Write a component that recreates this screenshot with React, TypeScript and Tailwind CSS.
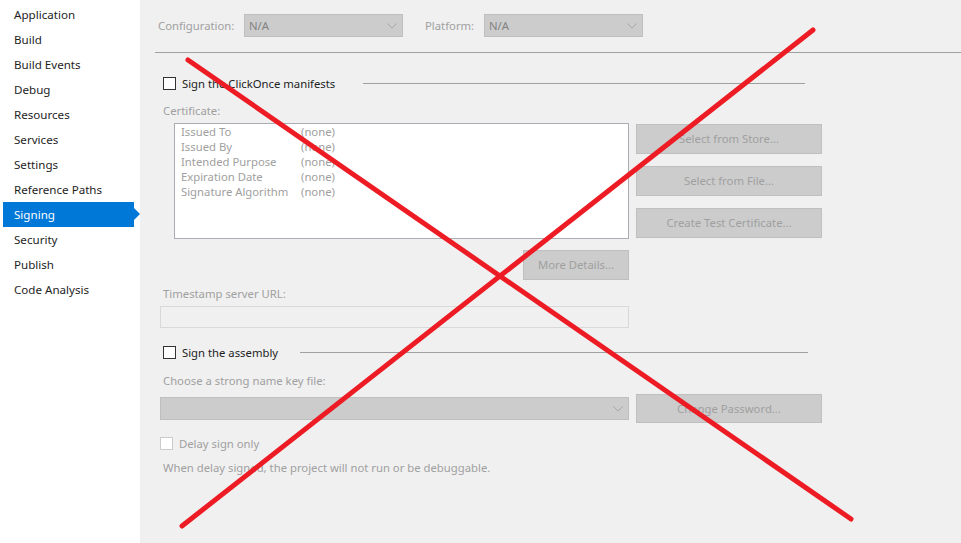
import React from 'react';

const navItems = [
  'Application',
  'Build',
  'Build Events',
  'Debug',
  'Resources',
  'Services',
  'Settings',
  'Reference Paths',
  'Signing',
  'Security',
  'Publish',
  'Code Analysis',
];

const certRows = [
  ['Issued To', '(none)'],
  ['Issued By', '(none)'],
  ['Intended Purpose', '(none)'],
  ['Expiration Date', '(none)'],
  ['Signature Algorithm', '(none)'],
];

const Chevron = () => (
  <svg width="10" height="6" viewBox="0 0 10 6" className="shrink-0">
    <path d="M0.5 0.5 L5 5 L9.5 0.5" fill="none" stroke="#a6a6a6" strokeWidth="1" />
  </svg>
);

const Combo = ({ value, className }: { value?: string; className: string }) => (
  <div className={`flex items-center justify-between bg-[#cccccc] border border-[#bfbfbf] pl-[4px] pr-[5px] text-[#838383] ${className}`}>
    <span>{value}</span>
    <Chevron />
  </div>
);

const DisabledButton = ({ label, className }: { label: string; className: string }) => (
  <div className={`flex items-center justify-center bg-[#cccccc] border border-[#bfbfbf] text-[#a0a0a0] ${className}`}>
    {label}
  </div>
);

export default function App() {
  return (
    <div className="relative flex h-screen w-full overflow-hidden text-[11.3px] leading-[16px] text-[#1e1e1e]" style={{ fontFamily: '"Noto Sans", "Segoe UI", sans-serif' }}>
      {/* side nav */}
      <div className="w-[140px] shrink-0 bg-white pt-[2px] text-[11.6px]">
        {navItems.map((item) => (
          <div key={item} className="relative">
            <div
              className={`ml-[3px] flex h-[25px] w-[131px] items-center pl-[11px] ${
                item === 'Signing' ? 'bg-[#0078d7] text-white' : ''
              }`}
            >
              {item}
            </div>
            {item === 'Signing' && (
              <div className="absolute left-[134px] top-[6px] h-0 w-0 border-y-[6px] border-l-[6px] border-y-transparent border-l-[#0078d7]" />
            )}
          </div>
        ))}
      </div>

      {/* main panel */}
      <div className="flex flex-1 flex-col bg-[#f0f0f0]">
        <div className="mt-[14px] flex h-[23px] items-center pl-[18px]">
          <span className="w-[86px] text-[#a0a0a0]">Configuration:</span>
          <Combo value="N/A" className="h-[23px] w-[159px]" />
          <span className="ml-[22px] w-[59px] text-[#a0a0a0]">Platform:</span>
          <Combo value="N/A" className="h-[23px] w-[159px]" />
        </div>

        <div className="ml-[15px] mt-[15px] h-px bg-[#a0a0a0]" />

        <div className="mt-[24px] flex h-[13px] w-[665px] items-center pl-[23px]">
          <div className="h-[13px] w-[13px] shrink-0 border border-[#333333] bg-white" />
          <span className="ml-[6px] whitespace-nowrap">Sign the ClickOnce manifests</span>
          <div className="ml-[28px] h-px flex-1 bg-[#a0a0a0]" />
        </div>

        <div className="mt-[13px] pl-[23px] text-[#a0a0a0]">Certificate:</div>

        <div className="mt-[4px] flex pl-[34px]">
          <div className="h-[116px] w-[455px] border border-[#abadb3] bg-white pl-[6px] leading-[15px] text-[#a0a0a0]">
            {certRows.map(([k, v]) => (
              <div key={k} className="flex">
                <span className="w-[120px] whitespace-nowrap">{k}</span>
                <span>{v}</span>
              </div>
            ))}
          </div>
          <div className="ml-[7px] mt-px flex flex-col gap-[12px]">
            <DisabledButton label="Select from Store..." className="h-[30px] w-[186px]" />
            <DisabledButton label="Select from File..." className="h-[30px] w-[186px]" />
            <DisabledButton label="Create Test Certificate..." className="h-[30px] w-[186px]" />
          </div>
        </div>

        <div className="mt-[11px] flex w-[489px] justify-end">
          <DisabledButton label="More Details..." className="h-[30px] w-[106px]" />
        </div>

        <div className="mt-[6px] pl-[23px] text-[#a0a0a0]">Timestamp server URL:</div>
        <div className="ml-[20px] mt-[4px] h-[22px] w-[469px] border border-[#d9d9d9] bg-[#f0f0f0]" />

        <div className="mt-[18px] flex h-[13px] w-[668px] items-center pl-[23px]">
          <div className="h-[13px] w-[13px] shrink-0 border border-[#333333] bg-white" />
          <span className="ml-[6px] whitespace-nowrap">Sign the assembly</span>
          <div className="ml-[22px] h-px flex-1 bg-[#a0a0a0]" />
        </div>

        <div className="mt-[14px] pl-[23px] text-[#a0a0a0]">Choose a strong name key file:</div>

        <div className="mt-[5px] flex items-start pl-[20px]">
          <Combo className="mt-[3px] h-[23px] w-[469px]" />
          <DisabledButton label="Change Password..." className="ml-[7px] h-[29px] w-[186px]" />
        </div>

        <div className="mt-[14px] flex h-[13px] items-center pl-[20px]">
          <div className="h-[13px] w-[13px] border border-[#cccccc] bg-white" />
          <span className="ml-[6px] text-[#a0a0a0]">Delay sign only</span>
        </div>

        <div className="mt-[10px] pl-[23px] text-[#a0a0a0]">
          When delay signed, the project will not run or be debuggable.
        </div>
      </div>

      {/* red cross drawn over the page */}
      <svg className="pointer-events-none absolute inset-0" width="961" height="543" viewBox="0 0 961 543">
        <line x1="188" y1="60" x2="851" y2="519" stroke="#ed1c24" strokeWidth="5" strokeLinecap="round" />
        <line x1="813" y1="30" x2="182" y2="526" stroke="#ed1c24" strokeWidth="5" strokeLinecap="round" />
      </svg>
    </div>
  );
}
